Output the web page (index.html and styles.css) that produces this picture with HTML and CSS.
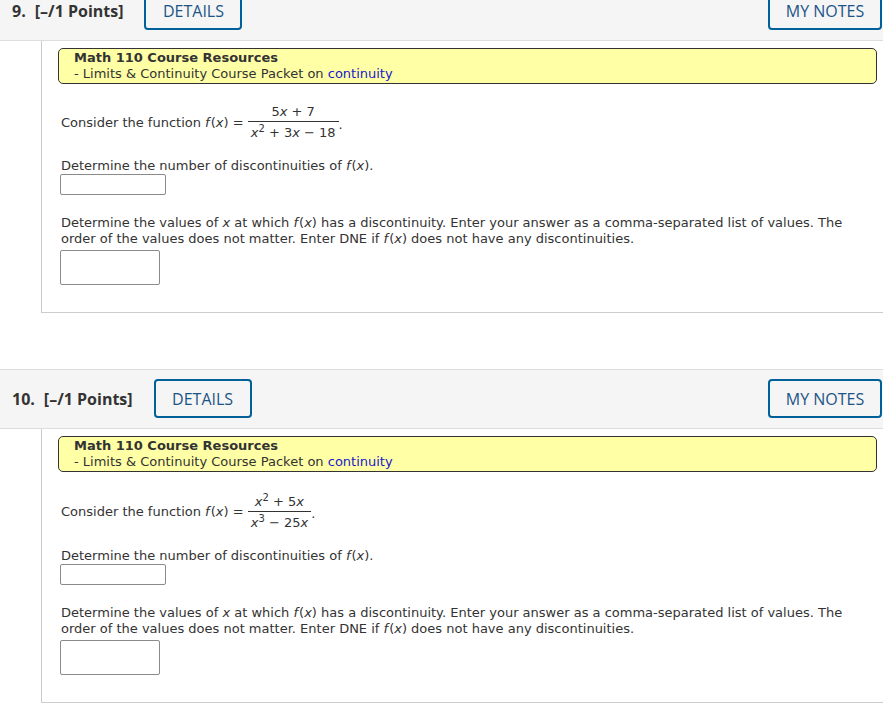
FILE: index.html
```html
<!DOCTYPE html>
<html>
<head>
<meta charset="utf-8">
<link rel="stylesheet" href="styles.css">
</head>
<body>
<div class="page">
  <section class="question">
    <div class="q-header">
      <span class="q-num">9.</span>
      <span class="q-points">[–/1 Points]</span>
      <button class="q-btn details">DETAILS</button>
      <span class="spacer"></span>
      <button class="q-btn notes">MY NOTES</button>
    </div>
    <div class="q-body">
      <div class="resource">
        <div class="res-title">Math 110 Course Resources</div>
        <div class="res-link">- Limits &amp; Continuity Course Packet on <a class="link">continuity</a></div>
      </div>
      <div class="prompt">
        <span>Consider the function <i class="fn">f</i>(<i>x</i>) =&nbsp;</span>
        <span class="frac">
          <span class="num">5<i>x</i> + 7</span>
          <span class="den"><i>x</i><sup>2</sup> + 3<i>x</i> − 18</span>
        </span>
        <span class="dot">.</span>
      </div>
      <p class="para first">Determine the number of discontinuities of <i class="fn">f</i>(<i>x</i>).</p>
      <input class="ans small" type="text">
      <p class="para">Determine the values of <i>x</i> at which <i class="fn">f</i>(<i>x</i>) has a discontinuity. Enter your answer as a comma-separated list of values. The order of the values does not matter. Enter DNE if <i class="fn">f</i>(<i>x</i>) does not have any discontinuities.</p>
      <input class="ans big" type="text">
    </div>
  </section>

  <section class="question">
    <div class="q-header">
      <span class="q-num">10.</span>
      <span class="q-points">[–/1 Points]</span>
      <button class="q-btn details">DETAILS</button>
      <span class="spacer"></span>
      <button class="q-btn notes">MY NOTES</button>
    </div>
    <div class="q-body">
      <div class="resource">
        <div class="res-title">Math 110 Course Resources</div>
        <div class="res-link">- Limits &amp; Continuity Course Packet on <a class="link">continuity</a></div>
      </div>
      <div class="prompt">
        <span>Consider the function <i class="fn">f</i>(<i>x</i>) =&nbsp;</span>
        <span class="frac tall">
          <span class="num"><i>x</i><sup>2</sup> + 5<i>x</i></span>
          <span class="den"><i>x</i><sup>3</sup> − 25<i>x</i></span>
        </span>
        <span class="dot">.</span>
      </div>
      <p class="para first">Determine the number of discontinuities of <i class="fn">f</i>(<i>x</i>).</p>
      <input class="ans small" type="text">
      <p class="para">Determine the values of <i>x</i> at which <i class="fn">f</i>(<i>x</i>) has a discontinuity. Enter your answer as a comma-separated list of values. The order of the values does not matter. Enter DNE if <i class="fn">f</i>(<i>x</i>) does not have any discontinuities.</p>
      <input class="ans big" type="text">
    </div>
  </section>
</div>
</body>
</html>
```

FILE: styles.css
```css
html, body {
  margin: 0;
  padding: 0;
  background: #fff;
}

.page {
  margin-top: -19px;
  font-family: "DejaVu Sans", Verdana, sans-serif;
  font-size: 13px;
  line-height: 16px;
  color: #333;
}

.question {
  margin-bottom: 56px;
}

.q-header {
  display: flex;
  align-items: center;
  background: #f5f5f5;
  border-top: 1px solid #ddd;
  border-bottom: 1px solid #ddd;
  padding: 9px 1px 10px 12px;
  font-family: "Open Sans", sans-serif;
}

.q-num {
  font-weight: 700;
  font-size: 16px;
  color: #333;
  margin-right: 9px;
}

.q-points {
  font-weight: 700;
  font-size: 16px;
  color: #333;
}

.spacer {
  flex: 1;
}

.q-btn {
  box-sizing: border-box;
  height: 39px;
  font-family: "Open Sans", sans-serif;
  font-size: 16px;
  color: #1b5487;
  background: transparent;
  border: 2px solid #00609a;
  border-radius: 4px;
  padding: 0;
}

.details {
  width: 98px;
  margin-left: 21px;
}

.notes {
  width: 114px;
}

.q-body {
  margin-left: 41px;
  border-left: 1px solid #ccc;
  border-bottom: 1px solid #ccc;
  padding: 7px 8px 27px 19px;
}

.resource {
  margin: 0 -2px 0 -3px;
  background: #ffffa6;
  border: 1px solid #333;
  border-radius: 5px;
  padding: 1px 15px;
}

.res-title {
  font-weight: 700;
}

.link {
  color: #2020c8;
}

.fn {
  padding-right: 1px;
}

.prompt {
  display: flex;
  align-items: center;
  margin-top: 20px;
}

.frac {
  display: inline-flex;
  flex-direction: column;
  align-items: center;
  text-align: center;
}

.frac .num {
  padding: 0 3px 1px;
  border-bottom: 1px solid #333;
  align-self: stretch;
}

.frac .den {
  padding: 3px 3px 0;
}

.frac sup {
  font-size: 10px;
  line-height: 0;
  vertical-align: 5px;
}

.frac.tall .num {
  padding-top: 2px;
}

.dot {
  align-self: center;
  padding-top: 4px;
}

.para {
  margin: 20px 0 0;
}

.para.first {
  margin-top: 17px;
}

.ans {
  display: block;
  box-sizing: border-box;
  margin: 0 0 0 -1px;
  border: 1px solid #8a8a8a;
  border-radius: 2px;
  background: #fff;
}

.ans.small {
  width: 106px;
  height: 21px;
}

.ans.big {
  width: 100px;
  height: 35px;
  margin-top: 3px;
}
```
